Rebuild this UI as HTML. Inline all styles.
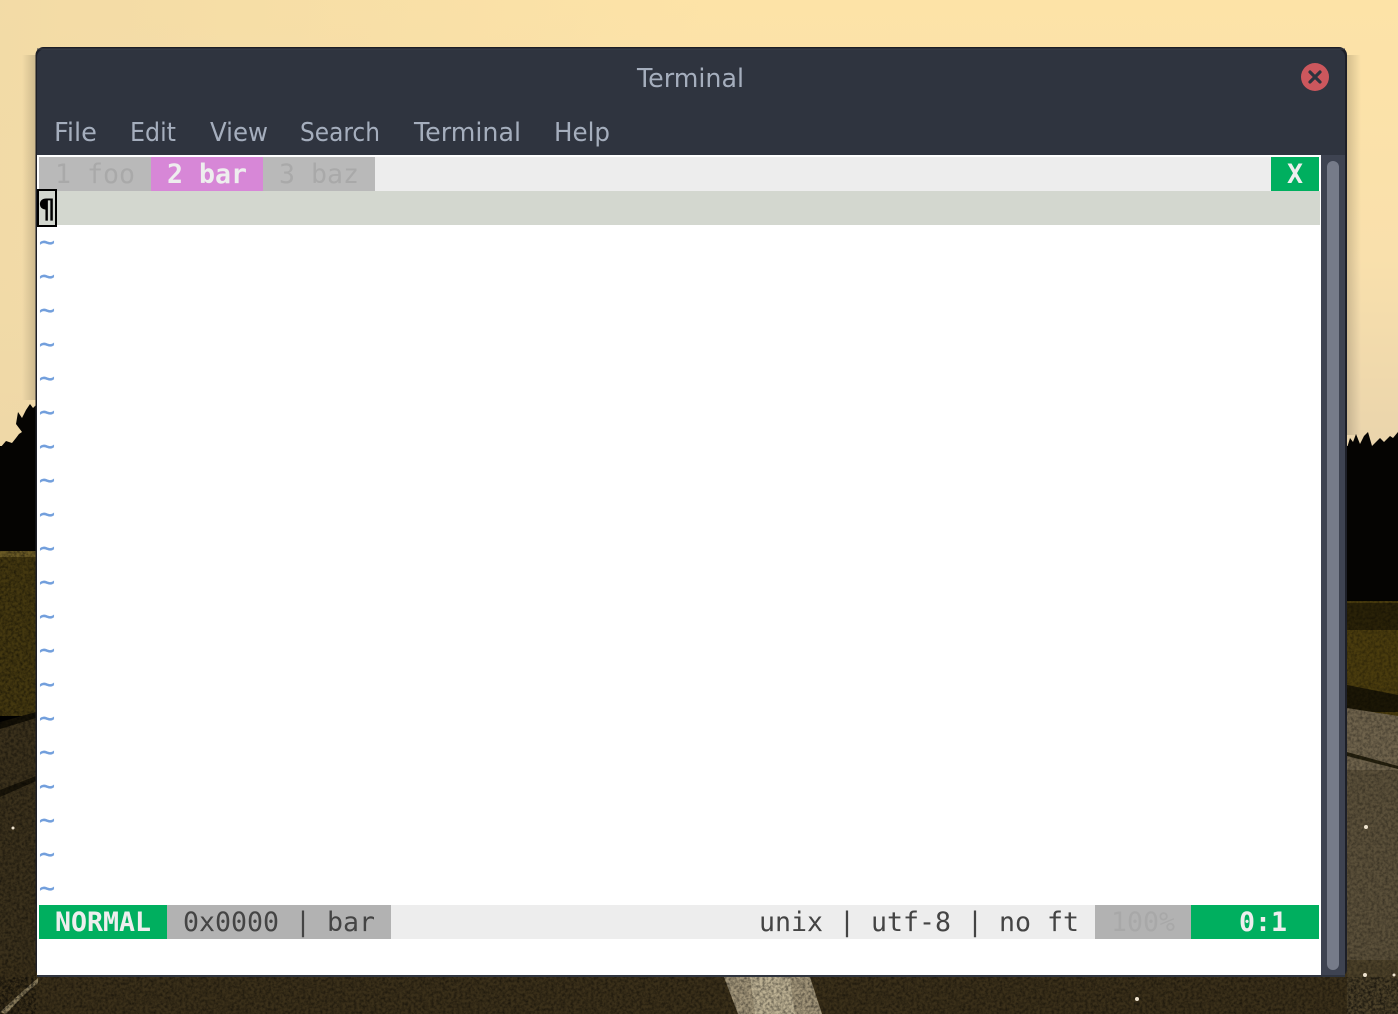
<!DOCTYPE html>
<html><head><meta charset="utf-8"><style>
html,body{margin:0;padding:0;background:#000}
svg{display:block}
.m{font-family:"DejaVu Sans Mono","Liberation Mono",monospace;font-size:26.58px;white-space:pre}
.b{font-weight:700}
.u{font-family:"DejaVu Sans","Liberation Sans",sans-serif;font-size:26px;fill:#a5aebd}
</style></head><body>
<svg width="1398" height="1014" viewBox="0 0 1398 1014" xmlns="http://www.w3.org/2000/svg">
<defs>
<linearGradient id="sky" x1="0" y1="0" x2="0" y2="1"><stop offset="0" stop-color="#fde3a7"/><stop offset=".55" stop-color="#f9e0ac"/><stop offset="1" stop-color="#e8d3ac"/></linearGradient>
<linearGradient id="lsky" x1="0" y1="0" x2="1" y2="0"><stop offset="0" stop-color="#f0d9a6" stop-opacity=".8"/><stop offset="1" stop-color="#f0d9a6" stop-opacity="0"/></linearGradient>
<linearGradient id="shadow" x1="0" y1="0" x2="1" y2="0"><stop offset="0" stop-color="#000" stop-opacity=".16"/><stop offset="1" stop-color="#000" stop-opacity="0"/></linearGradient>
<linearGradient id="shadowL" x1="1" y1="0" x2="0" y2="0"><stop offset="0" stop-color="#000" stop-opacity=".16"/><stop offset="1" stop-color="#000" stop-opacity="0"/></linearGradient>
<filter id="n" x="0" y="0" width="100%" height="100%"><feTurbulence type="fractalNoise" baseFrequency=".35" numOctaves="3" seed="4"/><feColorMatrix values="0 0 0 0 0  0 0 0 0 0  0 0 0 0 0  1.6 0 0 0 -.55"/></filter>
</defs>

<!-- wallpaper -->
<rect width="1398" height="470" fill="url(#sky)"/>
<rect width="700" height="470" fill="url(#lsky)"/>
<rect y="446" width="1398" height="164" fill="#050402"/>
<path d="M0 448L6 441L12 443L16 438L19 434L22 432L16 424L18 412L22 418L26 410L30 404L33 408L36 405V470H0Z" fill="#050402"/>
<path d="M1347 448L1350 438L1353 442L1356 434L1360 444L1364 436L1368 432L1372 446L1380 438L1384 442L1390 436L1393 438L1398 432V470H1347Z" fill="#050402"/>
<rect y="551" width="36" height="165" fill="#443810"/>
<rect y="551" width="36" height="6" fill="#6a5a25"/>
<path d="M1347 601H1398V720H1347Z" fill="#4a3c0e"/>
<path d="M1347 603H1398V630H1347Z" fill="#2a2208"/>
<path d="M1347 685L1398 695V712H1347Z" fill="#1c1706"/>
<path d="M0 725L36 716V1014H0Z" fill="#3b311c"/>
<path d="M0 722L36 712V718L0 729Z" fill="#141006"/>
<path d="M0 790L36 776V781L0 797Z" fill="#1a1509"/>
<path d="M1347 708L1398 716V1014H1347Z" fill="#6f634c"/>
<path d="M1347 752L1398 766V769L1347 756Z" fill="#25200f"/>
<rect x="1347" y="770" width="51" height="244" fill="#5b503a"/>
<rect x="0" y="960" width="1398" height="54" fill="#3b301a"/>
<path d="M1347 960H1398V1014H1347Z" fill="#4c4129"/>
<path d="M724 977H810L822 1014H738Z" fill="#a3967a"/>
<path d="M750 977H790L795 1014H755Z" fill="#bdb193"/>
<path d="M0 1012L24 990L38 978L38 983L24 995L6 1014Z" fill="#8a7c5c"/>
<rect y="551" width="36" height="463" filter="url(#n)" opacity=".6"/>
<rect x="1347" y="600" width="51" height="414" filter="url(#n)" opacity=".45"/>
<rect y="977" width="1398" height="37" filter="url(#n)" opacity=".6"/>
<g fill="#eee3cf"><circle cx="1365" cy="975" r="2"/><circle cx="1137" cy="999" r="2"/><circle cx="1366" cy="827" r="2"/><circle cx="1394" cy="975" r="1.5"/><circle cx="13" cy="828" r="1.5"/></g>
<rect x="1347" y="55" width="14" height="380" fill="url(#shadow)"/>
<rect x="22" y="55" width="14" height="345" fill="url(#shadowL)"/>

<!-- window -->
<rect x="35.5" y="47" width="1311.5" height="930" rx="8" fill="#1d1f27"/>
<path d="M37 977V57a8 8 0 0 1 8-8H1337a8 8 0 0 1 8 8V977Z" fill="#2f343f"/>
<rect x="37" y="48.5" width="1308" height="1" fill="#3a3f4b"/>

<text x="637" y="87" class="u" textLength="107" lengthAdjust="spacingAndGlyphs">Terminal</text>
<text x="54" y="141" class="u" textLength="43" lengthAdjust="spacingAndGlyphs">File</text>
<text x="130" y="141" class="u" textLength="46" lengthAdjust="spacingAndGlyphs">Edit</text>
<text x="210" y="141" class="u" textLength="58" lengthAdjust="spacingAndGlyphs">View</text>
<text x="300" y="141" class="u" textLength="80" lengthAdjust="spacingAndGlyphs">Search</text>
<text x="414" y="141" class="u" textLength="107" lengthAdjust="spacingAndGlyphs">Terminal</text>
<text x="554" y="141" class="u" textLength="56" lengthAdjust="spacingAndGlyphs">Help</text>

<circle cx="1315" cy="77" r="14" fill="#cc575d"/>
<path d="M1310 72L1320 82M1320 72L1310 82" stroke="#2f343f" stroke-width="3.2" stroke-linecap="round" fill="none"/>

<!-- scrollbar -->
<rect x="1321" y="155" width="24" height="820" fill="#3e4351"/>
<rect x="1327" y="161" width="12" height="809" rx="6" fill="#767b89"/>

<!-- terminal -->
<rect x="37" y="155" width="1284" height="820" fill="#fff"/>
<rect x="39" y="157" width="1280" height="34" fill="#ededed"/>
<rect x="39" y="157" width="112" height="34" fill="#b9b9b9"/>
<rect x="151" y="157" width="112" height="34" fill="#d787d7"/>
<rect x="263" y="157" width="112" height="34" fill="#b9b9b9"/>
<rect x="1271" y="157" width="48" height="34" fill="#00af5f"/>
<text x="55" y="183" class="m" fill="#a9a9a9">1 foo</text>
<text x="167" y="183" class="m b" fill="#eeeeee">2 bar</text>
<text x="279" y="183" class="m" fill="#a9a9a9">3 baz</text>
<text x="1287" y="183" class="m b" fill="#eeeeee">X</text>

<rect x="37" y="191" width="1283" height="34" fill="#d3d7cf"/>
<rect x="38" y="190" width="18" height="36" fill="#d3d7cf" stroke="#000" stroke-width="2"/>
<text x="39" y="218" class="m b" fill="#000">¶</text>

<g class="m" fill="#729fdc" stroke="#729fdc" stroke-width=".35">
<text x="39" y="251">~</text><text x="39" y="285">~</text><text x="39" y="319">~</text><text x="39" y="353">~</text>
<text x="39" y="387">~</text><text x="39" y="421">~</text><text x="39" y="455">~</text><text x="39" y="489">~</text>
<text x="39" y="523">~</text><text x="39" y="557">~</text><text x="39" y="591">~</text><text x="39" y="625">~</text>
<text x="39" y="659">~</text><text x="39" y="693">~</text><text x="39" y="727">~</text><text x="39" y="761">~</text>
<text x="39" y="795">~</text><text x="39" y="829">~</text><text x="39" y="863">~</text><text x="39" y="897">~</text>
</g>

<rect x="39" y="905" width="1280" height="34" fill="#ededed"/>
<rect x="39" y="905" width="128" height="34" fill="#00af5f"/>
<rect x="167" y="905" width="224" height="34" fill="#b2b2b2"/>
<rect x="1095" y="905" width="96" height="34" fill="#b2b2b2"/>
<rect x="1191" y="905" width="128" height="34" fill="#00af5f"/>
<text x="55" y="931" class="m b" fill="#eeeeee">NORMAL</text>
<text x="183" y="931" class="m" fill="#444444">0x0000 | bar</text>
<text x="759" y="931" class="m" fill="#444444">unix | utf-8 | no ft</text>
<text x="1111" y="931" class="m" fill="#a8a8a8">100%</text>
<text x="1239" y="931" class="m b" fill="#eeeeee">0:1</text>
</svg>
</body></html>
